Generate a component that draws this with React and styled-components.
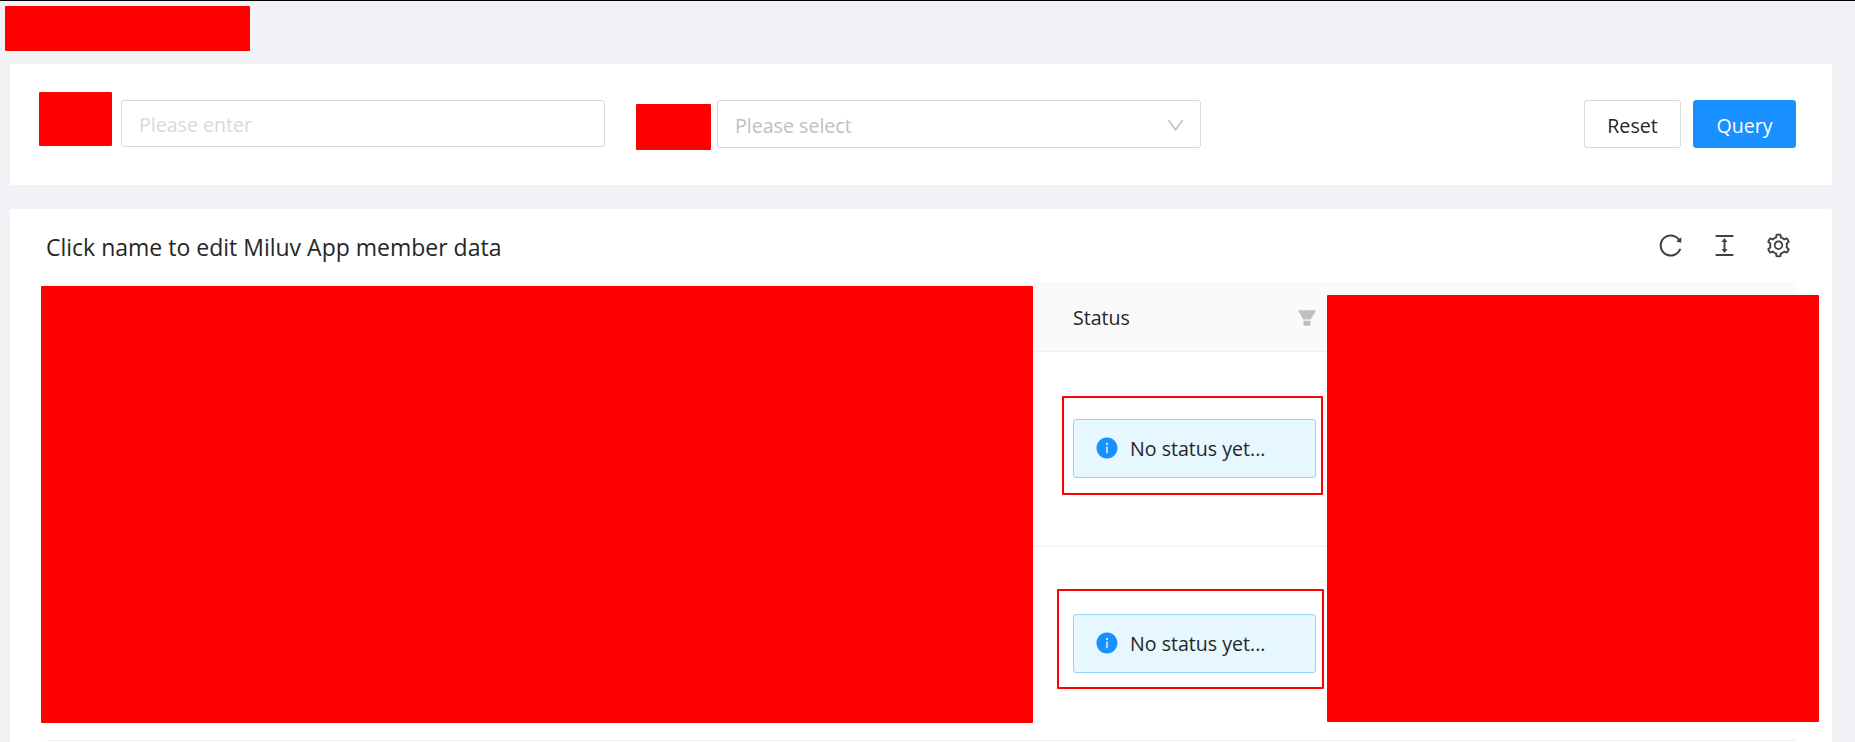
import React from "react";
import styled, { createGlobalStyle } from "styled-components";
import {
  AiOutlineReload,
  AiOutlineColumnHeight,
  AiOutlineSetting,
  AiFillFilter,
  AiFillInfoCircle,
  AiOutlineDown,
} from "react-icons/ai";

const Global = createGlobalStyle`
  html, body { margin: 0; padding: 0; height: 100%; overflow: hidden; background: #f0f2f5; }
  body { font-family: "Open Sans", "Noto Sans", sans-serif; color: #262626; }
  * { box-sizing: border-box; }
`;

const Page = styled.div`
  height: 742px;
  overflow: hidden;
  border-top: 1px solid #000;
  background: #f0f2f5;
  padding-right: 23px;
  padding-left: 10px;
`;

const Redact = styled.div`
  background: #f00;
  border-radius: 1px;
  flex: none;
  width: ${(p) => p.$w}px;
  height: ${(p) => p.$h}px;
  margin-top: ${(p) => p.$top || 0}px;
`;

const TopBar = styled.div`
  height: 63px;
  margin-left: -5px;
  padding-top: 5px;
`;

const FilterCard = styled.section`
  height: 121px;
  background: #fff;
  display: flex;
  align-items: flex-start;
  padding: 28px 36px 0 29px;
`;

const Field = styled.div`
  display: flex;
  align-items: flex-start;
  gap: ${(p) => p.$gap}px;
  margin-right: 31px;
`;

const Input = styled.div`
  width: ${(p) => p.$w}px;
  height: ${(p) => p.$h}px;
  margin-top: 8px;
  border: 1px solid #d9d9d9;
  border-radius: 3px;
  background: #fff;
  display: flex;
  align-items: center;
  justify-content: space-between;
  padding: 2px 17px 0;
  font-size: 19.6px;
  color: ${(p) => p.$color};
`;

const Chevron = styled(AiOutlineDown)`
  color: #bfbfbf;
  font-size: 21px;
  margin-right: -3px;
`;

const Actions = styled.div`
  margin-left: auto;
  display: flex;
  gap: 12px;
  padding-top: 8px;
`;

const Button = styled.button`
  height: 48px;
  width: ${(p) => p.$w}px;
  border-radius: 3px;
  font-family: inherit;
  font-size: 19.6px;
  padding: 2px 0 0;
  border: 1px solid ${(p) => (p.$primary ? "#1890ff" : "#d9d9d9")};
  background: ${(p) => (p.$primary ? "#1890ff" : "#fff")};
  color: ${(p) => (p.$primary ? "#fff" : "#262626")};
`;

const TableCard = styled.section`
  margin-top: 24px;
  height: 560px;
  background: #fff;
  border-radius: 3px 3px 0 0;
  padding: 0 36px;
`;

const TitleBar = styled.div`
  height: 73px;
  display: flex;
  align-items: center;
  justify-content: space-between;
  font-size: 23px;
`;

const TitleText = styled.span`
  padding-top: 2px;
`;

const Tools = styled.div`
  display: flex;
  align-items: center;
  gap: 27px;
  margin-right: 4px;
  color: #404040;
  font-size: 27px;
  line-height: 0;
`;

const Table = styled.div`
  position: relative;
`;

const Row = styled.div`
  display: grid;
  grid-template-columns: 987px 294px 1fr;
  height: ${(p) => p.$h}px;
  border-bottom: 1px solid #f0f0f0;
`;

const HeadRow = styled(Row)`
  background: #fafafa;
  border-radius: 3px 3px 0 0;
`;

const HeadCell = styled.div`
  grid-column: 2;
  display: flex;
  align-items: center;
  justify-content: space-between;
  padding: 2px 9px 0 40px;
  font-size: 19.6px;
`;

const FilterIcon = styled(AiFillFilter)`
  color: #bfbfbf;
  font-size: 22px;
`;

const StatusCell = styled.div`
  grid-column: 2;
  display: flex;
  align-items: flex-start;
  padding: 67px 11px 0 40px;
`;

const Alert = styled.div`
  position: relative;
  width: 100%;
  height: 59px;
  display: flex;
  align-items: center;
  gap: 11px;
  padding: 0 0 0 22px;
  background: #e6f7ff;
  border: 1px solid #91d5ff;
  border-radius: 3px;
  font-size: 19.6px;
`;

const InfoIcon = styled(AiFillInfoCircle)`
  color: #1890ff;
  font-size: 24px;
  margin-left: -1px;
  margin-top: -1px;
`;

const Marker = styled.div`
  position: absolute;
  top: ${(p) => p.$top}px;
  bottom: ${(p) => p.$bottom}px;
  left: ${(p) => p.$left}px;
  right: ${(p) => p.$right}px;
  border: 2px solid #f00;
  border-radius: 1px;
  pointer-events: none;
`;

const Cover = styled.div`
  position: absolute;
  background: #f00;
  border-radius: 1px;
  left: ${(p) => p.$left}px;
  top: ${(p) => p.$top}px;
  width: ${(p) => p.$w}px;
  height: ${(p) => p.$h}px;
`;

const rows = [
  { h: 195, marker: { top: -24, bottom: -18, left: -12, right: -8 } },
  { h: 194, marker: { top: -26, bottom: -17, left: -17, right: -9 } },
];

export default function App() {
  return (
    <Page>
      <Global />
      <TopBar>
        <Redact $w={245} $h={45} />
      </TopBar>
      <FilterCard>
        <Field $gap={9}>
          <Redact $w={73} $h={54} />
          <Input $w={484} $h={47} $color="#d9d9d9">Please enter</Input>
        </Field>
        <Field $gap={6}>
          <Redact $w={75} $h={46} $top={12} />
          <Input $w={484} $h={48} $color="#bfbfbf">
            Please select
            <Chevron />
          </Input>
        </Field>
        <Actions>
          <Button $w={97}>Reset</Button>
          <Button $w={103} $primary>Query</Button>
        </Actions>
      </FilterCard>
      <TableCard>
        <TitleBar>
          <TitleText>Click name to edit Miluv App member data</TitleText>
          <Tools>
            <AiOutlineReload />
            <AiOutlineColumnHeight />
            <AiOutlineSetting />
          </Tools>
        </TitleBar>
        <Table>
          <HeadRow $h={70}>
            <HeadCell>
              Status
              <FilterIcon />
            </HeadCell>
          </HeadRow>
          {rows.map((r, i) => (
            <Row key={i} $h={r.h}>
              <StatusCell>
                <Alert>
                  <InfoIcon />
                  No status yet...
                  <Marker $top={r.marker.top} $bottom={r.marker.bottom} $left={r.marker.left} $right={r.marker.right} />
                </Alert>
              </StatusCell>
            </Row>
          ))}
          <Cover $left={-5} $top={4} $w={992} $h={437} />
          <Cover $left={1281} $top={13} $w={492} $h={427} />
        </Table>
      </TableCard>
    </Page>
  );
}
